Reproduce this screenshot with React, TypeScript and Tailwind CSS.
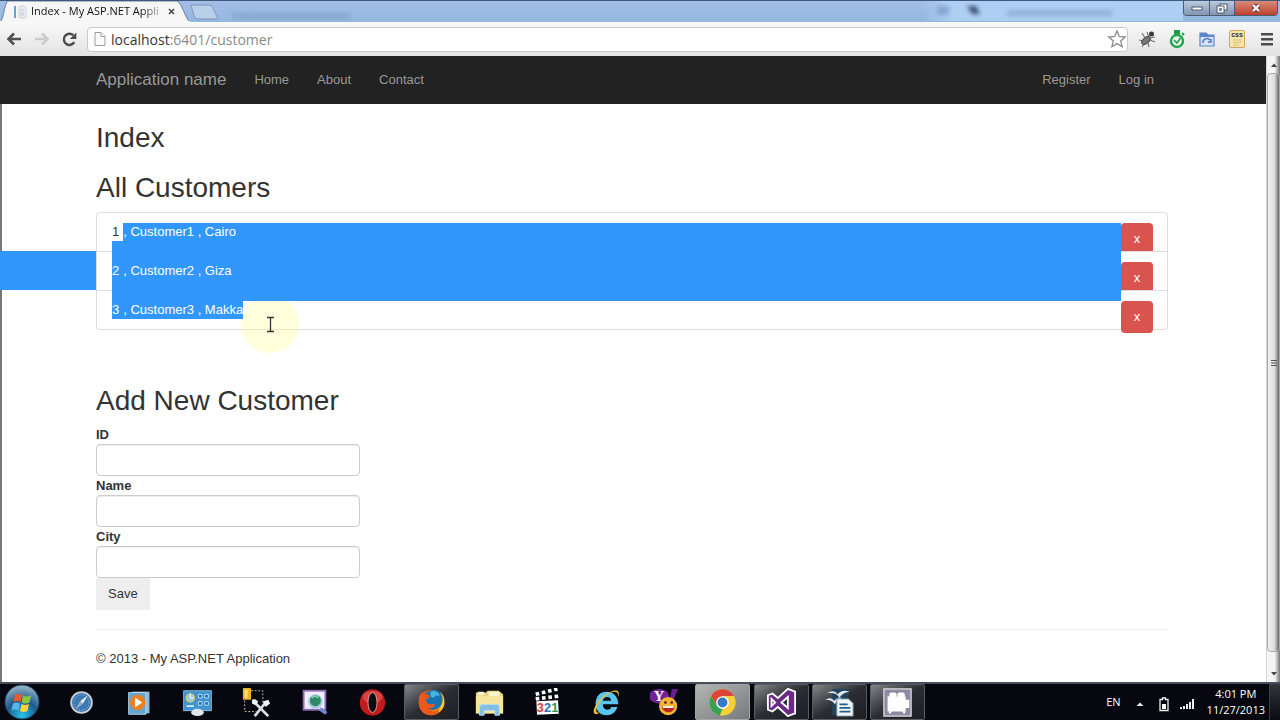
import type { ReactNode } from "react";

const customers = [
  { id: 1, name: "Customer1", city: "Cairo" },
  { id: 2, name: "Customer2", city: "Giza" },
  { id: 3, name: "Customer3", city: "Makka" },
];

const fields = ["ID", "Name", "City"];

/* ---------- Browser chrome ---------- */

function TabStrip() {
  return (
    <div className="relative flex h-[22px] items-stretch overflow-hidden border-t border-[#3d5a7c] bg-linear-to-b from-[#a3bde6] to-[#93b8e0]">
      <div className="relative h-full w-[190px] shrink-0">
        <svg viewBox="0 0 190 21" className="absolute inset-0 h-full w-full" aria-hidden="true">
          <path d="M0 21C4 18 4 3 8 0H177C182 2 186 19 190 21Z" fill="#f6f6f7" stroke="#6c7f9c" strokeWidth="1" />
          <rect x="0" y="20" width="190" height="2" fill="#f6f6f7" />
        </svg>
        <div className="relative flex h-full items-center pl-[13px]">
          <svg width="14" height="14" viewBox="0 0 14 14" aria-hidden="true">
            <rect x="1" y="1" width="2" height="12" fill="#6fa3cf" />
            <path d="M6 1h5l2 2v10H6z" fill="#e9ecef" stroke="#cfd6dd" />
            <path d="M7 5h4M7 8h4M7 10h4" stroke="#c3cbd3" />
          </svg>
          <span className="ml-1 w-[130px] overflow-hidden bg-linear-to-r from-[#111] from-85% to-[#ccc] bg-clip-text font-['Open_Sans',sans-serif] text-[11px] whitespace-nowrap text-transparent">
            Index - My ASP.NET Appli
          </span>
          <button type="button" aria-label="Close tab" className="ml-1.5">
            <svg width="9" height="9" viewBox="0 0 9 9"><path d="M2 2l5 5M7 2l-5 5" stroke="#444" strokeWidth="1.5" /></svg>
          </button>
        </div>
      </div>
      <button type="button" aria-label="New tab" className="h-[20px] self-start">
        <svg width="30" height="20" viewBox="0 0 30 20">
          <path d="M1 4h18q3 0 4 3l5 11H8q-3 0-4-3z" fill="#b9cfea" stroke="#7f98bb" />
        </svg>
      </button>
      <svg width="140" height="20" viewBox="0 0 140 20" aria-hidden="true">
        <rect x="12" y="12" width="118" height="6" fill="#6f8fb8" opacity=".4" className="blur-[2px]" />
      </svg>
      <div className="flex-1" />
      <svg width="260" height="20" viewBox="0 0 260 20" aria-hidden="true">
        <defs>
          <linearGradient id="glass">
            <stop offset="0" stopColor="#b3d3f7" stopOpacity="0" />
            <stop offset=".1" stopColor="#b3d3f7" stopOpacity=".8" />
            <stop offset="1" stopColor="#b3d3f7" stopOpacity=".8" />
          </linearGradient>
        </defs>
        <rect width="260" height="20" fill="url(#glass)" />
        <g className="blur-[2px]">
          <rect x="14" y="5" width="12" height="9" fill="#6c8fbd" opacity=".6" />
          <path d="M44 5h9l4 8h-8z" fill="#3d5577" />
          <rect x="84" y="9" width="105" height="6" fill="#7f9fc7" opacity=".6" />
        </g>
      </svg>
      <div className="flex h-[15px] overflow-hidden rounded-b border border-t-0 border-[#4c5b70]">
        <button type="button" aria-label="Minimize" className="flex w-[26px] items-center justify-center border-r border-[#4c5b70] bg-linear-to-b from-[#bccbdd] to-[#8196b3]">
          <svg width="12" height="6" viewBox="0 0 12 6"><rect x="1" y="2" width="10" height="3" fill="#fff" stroke="#4d5a6c" /></svg>
        </button>
        <button type="button" aria-label="Restore" className="flex w-[25px] items-center justify-center border-r border-[#4c5b70] bg-linear-to-b from-[#bccbdd] to-[#8196b3]">
          <svg width="12" height="11" viewBox="0 0 12 11">
            <rect x="4" y="1" width="7" height="6" fill="#fff" stroke="#4d5a6c" />
            <rect x="1" y="3" width="7" height="7" fill="#fff" stroke="#4d5a6c" />
            <rect x="3" y="5" width="3" height="3" fill="#7c8ba2" />
          </svg>
        </button>
        <button type="button" aria-label="Close" className="flex w-[42px] items-center justify-center bg-linear-to-b from-[#d98a7a] to-[#bb3f2d]">
          <svg width="12" height="10" viewBox="0 0 12 10">
            <path d="M3 2l6 6M9 2L3 8" stroke="#5f2a25" strokeWidth="4" />
            <path d="M3 2l6 6M9 2L3 8" stroke="#fff" strokeWidth="2.4" />
          </svg>
        </button>
      </div>
      <div className="w-0.5" />
    </div>
  );
}

function Toolbar() {
  return (
    <div className="flex h-[34px] items-center bg-linear-to-b from-[#f9f9f9] to-[#e3e3e3] pr-[3px] pl-[5px]">
      <button type="button" aria-label="Back" className="w-[28px]">
        <svg width="18" height="16" viewBox="0 0 18 16" fill="none" stroke="#505050" strokeWidth="2.6"><path d="M16 8H4M9 2.5L3.500 8L9 13.500" /></svg>
      </button>
      <button type="button" aria-label="Forward" className="w-[28px]">
        <svg width="18" height="16" viewBox="0 0 18 16" fill="none" stroke="#cbcbcb" strokeWidth="2.6"><path d="M2 8h12M9 2.500L14.500 8L9 13.500" /></svg>
      </button>
      <button type="button" aria-label="Reload" className="w-[26px]">
        <svg width="17" height="17" viewBox="0 0 17 17">
          <path d="M13.300 11.200A5.600 5.600 0 1 1 12.300 4.200" fill="none" stroke="#4c4c4c" strokeWidth="2.400" />
          <path d="M15.300 1.500V8H8.800z" fill="#4c4c4c" />
        </svg>
      </button>
      <div className="flex h-[25px] flex-1 items-center rounded-sm border border-[#c9c9c9] bg-white pl-1">
        <svg width="14" height="16" viewBox="0 0 14 16" fill="#fbfbfb" stroke="#9b9b9b" className="ml-px shrink-0" aria-hidden="true">
          <path d="M2 1.500h6l4 4v9H2z" />
          <path d="M8 1.500v4h4" />
        </svg>
        <p className="ml-1 flex-1 font-['Open_Sans',sans-serif] text-[14px] text-[#8a8a8a]">
          <span className="text-[#333]">localhost</span>:6401/customer
        </p>
        <button type="button" aria-label="Bookmark this page">
          <svg width="20" height="20" viewBox="0 0 20 20" fill="#fff" stroke="#8a8a8a" strokeWidth="1.300">
            <path d="M10 2l2.300 5.500 5.900.500-4.500 3.900 1.400 5.800-5.100-3.100-5.100 3.100 1.400-5.800L1.800 8l5.900-.500z" />
          </svg>
        </button>
      </div>
      <div className="ml-[9px] flex items-center gap-2.5">
        <button type="button" aria-label="Firebug" className="size-5">
          <svg viewBox="0 0 20 20" fill="none" stroke="#777" strokeWidth="1.200">
            <path d="M8 9L5 4M12 8l-2-5M7 12l-5-1M8 14l-3 4M11 14l1 4M13 11l5 2M13 9l5-1" />
            <ellipse cx="9" cy="11.500" rx="5" ry="2.800" transform="rotate(-40 9 11.500)" fill="#777" stroke="#555" />
            <circle cx="14.500" cy="5" r="2.500" fill="#3a3a3a" stroke="none" />
          </svg>
        </button>
        <button type="button" aria-label="Page timer" className="size-5">
          <svg viewBox="0 0 20 20">
            <path d="M7 1h6v4H7z" fill="#1d9c48" />
            <path d="M15 4l2 2" stroke="#1d9c48" strokeWidth="2" />
            <circle cx="10" cy="12" r="6" fill="#e5f6ea" stroke="#1fa34c" strokeWidth="2.400" />
            <path d="M7 11l3 3 3.500-5" fill="none" stroke="#1fa34c" strokeWidth="1.600" />
          </svg>
        </button>
        <button type="button" aria-label="Sync" className="size-5">
          <svg viewBox="0 0 20 20">
            <path d="M3 4h6l2 2h6v11H3z" fill="#d6e2f8" stroke="#5c86cf" strokeWidth="1.200" />
            <path d="M3 4h6l2 2h6v2H3z" fill="#5c86cf" />
            <path d="M6 14a4 4 0 0 1 7-3M14 10v3h-3" fill="none" stroke="#4a74c0" strokeWidth="1.400" />
          </svg>
        </button>
        <button type="button" aria-label="CSS viewer" className="size-5">
          <svg viewBox="0 0 20 20">
            <rect x="2.500" y="1.500" width="15" height="17" rx="1.500" fill="#f6e7ad" stroke="#cfa659" />
            <text x="10" y="8" textAnchor="middle" fontSize="7" fontWeight="700" fontFamily="Liberation Sans" fill="#333">css</text>
            <path d="M6 11h8M6 13.500h8M6 16h6" stroke="#dcbd6c" />
          </svg>
        </button>
        <button type="button" aria-label="Menu" className="size-5">
          <svg viewBox="0 0 20 20" fill="#4c4c4c"><path d="M4 4h12v2.500H4zM4 9h12v2.500H4zM4 14h12v2.500H4z" /></svg>
        </button>
      </div>
    </div>
  );
}

function Scrollbar() {
  return (
    <div className="flex w-[14px] shrink-0 flex-col items-center border-l border-[#d5d5d5] bg-linear-to-r from-[#f4f4f4] from-60% to-[#777]">
      <svg width="14" height="17" viewBox="0 0 14 17" aria-hidden="true"><path d="M4 11l3-3.500 3 3.500z" fill="#444" /></svg>
      <div className="flex w-full flex-1 items-center justify-center rounded-sm border border-[#aaa] bg-linear-to-r from-[#f2f2f2] via-[#dcdcdc] via-60% to-[#666]">
        <svg width="8" height="8" viewBox="0 0 8 8" aria-hidden="true"><path d="M1 1.500h6M1 4h6M1 6.500h6" stroke="#555" /></svg>
      </div>
      <svg width="14" height="30" viewBox="0 0 14 30" aria-hidden="true"><path d="M4 20h6l-3 3.500z" fill="#444" /></svg>
    </div>
  );
}

/* ---------- Web page ---------- */

function Navbar() {
  return (
    <nav className="flex h-12 items-center gap-7 bg-[#222] pr-[112px] pl-24 text-[13px] text-[#999]">
      <a href="#" className="text-[17px]">Application name</a>
      <a href="#">Home</a>
      <a href="#">About</a>
      <a href="#">Contact</a>
      <a href="#" className="ml-auto">Register</a>
      <a href="#">Log in</a>
    </nav>
  );
}

function CustomerList() {
  return (
    <div className="relative">
      <ul className="divide-y divide-[#ddd] rounded border border-[#ddd]">
        {customers.map((customer, index) => {
          const first = index === 0;
          const last = index === customers.length - 1;
          return (
            <li key={customer.id} className={last ? "relative flex h-[38px] items-start pt-2.5 pr-3.5 pl-[15px]" : "relative flex h-[39px] items-start pt-2.5 pr-3.5 pl-[15px]"}>
              {index === 1 && <span className="absolute -top-px right-full mr-px h-[39px] w-24 bg-[#3297fd]" />}
              <p className={last ? "z-10 flex-1 leading-[18px] text-white" : "z-10 h-[39px] flex-1 bg-[#3297fd] leading-[18px] text-white"}>
                <span className={last ? "inline-block bg-[#3297fd]" : "inline-block"}>
                  <span className={first ? "inline-block bg-white pr-1 text-[#333]" : "inline-block pr-1"}>{customer.id}</span>
                  {`, ${customer.name} , ${customer.city}`}
                </span>
              </p>
              <div className={last ? "h-8" : "h-7 overflow-hidden"}>
                <button type="button" aria-label={`Delete ${customer.name}`} className="size-8 rounded bg-[#d9534f] text-white">
                  x
                </button>
              </div>
            </li>
          );
        })}
      </ul>
      {/* pointer with its click highlight */}
      <svg width="60" height="60" viewBox="0 0 60 60" className="absolute top-[82px] left-[144px]" aria-hidden="true">
        <circle cx="30" cy="30" r="29" fill="#ffffa8" opacity=".4" />
        <path d="M27 23.500h3l.500.500.500-.500h3M27 37.500h3l.500-.500.500.500h3M30.500 24v13" fill="none" stroke="#333" strokeWidth="1.300" />
      </svg>
    </div>
  );
}

function CustomerForm() {
  return (
    <form onSubmit={(e) => e.preventDefault()} className="flex flex-col items-start">
      {fields.map((field) => (
        <div key={field}>
          <label htmlFor={field} className="block leading-[19px] font-bold">{field}</label>
          <input id={field} type="text" className="block h-8 w-[264px] rounded border border-[#ccc] bg-white px-3 shadow-[inset_0_1px_1px_rgba(0,0,0,0.075)]" />
        </div>
      ))}
      <button type="submit" className="h-8 bg-[#eee] px-3">Save</button>
    </form>
  );
}

/* ---------- Taskbar ---------- */

type TaskItem = { label: string; state?: "open" | "active"; icon: ReactNode };

const tasks: TaskItem[] = [
  {
    label: "Safari",
    icon: (
      <>
        <circle cx="16" cy="16" r="12.500" fill="#c9ced4" />
        <circle cx="16" cy="16" r="10.500" fill="#3c78b4" />
        <circle cx="16" cy="16" r="8.500" fill="none" stroke="#b9d4ec" strokeDasharray="1 2" />
        <path d="M23 8l-5.500 9.500-3-3z" fill="#e8eef4" />
        <path d="M9 24l5.500-9.500 3 3z" fill="#9eb0c2" />
      </>
    ),
  },
  {
    label: "Media Player",
    icon: (
      <>
        <path d="M8 4h19v24H8z" fill="#8ebbd8" />
        <path d="M4 5h19v24H4z" fill="#64a5cf" stroke="#bcd9ea" />
        <circle cx="14" cy="16" r="8.500" fill="#ec8021" />
        <path d="M11 10.500l8 5.500-8 5.500z" fill="#fff" />
      </>
    ),
  },
  {
    label: "Control Panel",
    icon: (
      <>
        <rect x="0" y="3" width="32" height="22" rx="1" fill="#3f93cf" stroke="#8fc5e7" />
        <circle cx="8" cy="11" r="4.500" fill="#8fd0ef" stroke="#dcc267" strokeWidth="1.500" />
        <path d="M8 6v5h4" stroke="#fff" fill="none" />
        <path d="M17 7h4v4h-4zM24 7h4v4h-4zM17 15h4v4h-4zM24 15h4v4h-4z" fill="#246aa8" stroke="#bfe2f5" />
        <path d="M4 20h8" stroke="#d5ecf8" strokeWidth="2" />
        <ellipse cx="16" cy="27" rx="7" ry="4" fill="#dfe7ec" />
      </>
    ),
  },
  {
    label: "Configuration",
    icon: (
      <>
        <path d="M10 3h13v13M3 14v12h13" fill="none" stroke="#d6d6a2" strokeDasharray="2 2" />
        <rect x="1" y="0" width="9" height="13" rx="1" fill="#eeb624" />
        <rect x="3" y="2" width="3" height="9" fill="#ffe38a" />
        <path d="M14 16l15 15M26 16L14 31" stroke="#d9dee2" strokeWidth="3" />
        <path d="M11 13l3-1 4 3-3 4-4-2zM23 15l6-2 2 4-5 4z" fill="#eff2f4" />
      </>
    ),
  },
  {
    label: "Magnifier",
    icon: (
      <>
        <rect x="4" y="3" width="24" height="21" fill="#f1edf7" stroke="#8f6cb3" strokeWidth="2" />
        <circle cx="17" cy="15" r="8" fill="#a8c9e9" />
        <circle cx="17" cy="14" r="6" fill="#2c8a62" />
        <path d="M13 11q4-4 7 0" stroke="#84d0a6" strokeWidth="2" fill="none" />
        <path d="M22 23l7 5" stroke="#7286d2" strokeWidth="4" />
      </>
    ),
  },
  {
    label: "Opera",
    icon: (
      <>
        <ellipse cx="16" cy="16" rx="14" ry="14.500" fill="#c11b20" />
        <ellipse cx="16" cy="10" rx="11" ry="7" fill="#ee6b60" opacity=".5" />
        <ellipse cx="16" cy="16" rx="5" ry="11" fill="#0b0c12" stroke="#f3aaa0" />
      </>
    ),
  },
  {
    label: "Firefox",
    state: "open",
    icon: (
      <>
        <circle cx="16" cy="16" r="14" fill="#e66000" />
        <circle cx="18" cy="13" r="11" fill="#1673b4" />
        <path d="M25 4c4 5 4 10 2 14-2 5-7 8-12 7 6 4 12 2 15-6 1-5 0-12-5-15z" fill="#ffca27" />
        <path d="M2 13C2 8 5 5 7 4c0 2 1 3 3 3 3 0 4 1 4 3l-4 3c0 3 2 5 5 5 2 0 3-1 5 0-1 4-6 6-10 3 4 7 12 5 15 1-1 6-5 8-10 8C6 30 1 23 2 13z" fill="#e8591b" />
        <path d="M15 4c5-2 9 1 10 5l-4-1-3 3-3-2z" fill="#49b5df" />
      </>
    ),
  },
  {
    label: "Explorer",
    icon: (
      <>
        <path d="M1 5h11l2-2h12l5 4v21H1z" fill="#e8d27c" />
        <path d="M3 4h7v4H3zM15 4h12v5H15z" fill="#f7f3cf" />
        <path d="M1 9h30v19H1z" fill="#f6e69c" />
        <path d="M5 30v-9q0-3 3-3h16q3 0 3 3v9h-5v-5H10v5z" fill="#83bfe2" stroke="#bfe2f3" />
      </>
    ),
  },
  {
    label: "Media Player Classic",
    icon: (
      <>
        <rect x="4" y="14" width="24" height="15" fill="#fff" transform="rotate(-3 16 20)" />
        <path d="M3 12l25-3M3 7l24-6" stroke="#fff" strokeWidth="4" strokeDasharray="4 3" />
        <g fontFamily="Liberation Sans" fontSize="14" fontWeight="700">
          <text x="4" y="27" fill="#db402e">3</text>
          <text x="12" y="27" fill="#2a72bd">2</text>
          <text x="20" y="27" fill="#2f9b4a">1</text>
        </g>
      </>
    ),
  },
  {
    label: "Internet Explorer",
    icon: (
      <>
        <path d="M28 21c-2 6-6 9-12 9C9 30 4 25 4 17S9 4 16 4s13 5 13 14H12c0 4 2 6 5 6 2 0 4-1 4-3z" fill="#5cc4f0" />
        <path d="M12 14h9c0-3-2-4-4.500-4S12 12 12 14z" fill="#07101c" />
        <path d="M29 10c2-6-1-9-8-6C12 7 4 17 2 24c-1 5 2 6 7 3-4 1-5-1-4-5 3-7 9-14 16-17 6-2 8 0 8 5z" fill="#f2c12e" />
      </>
    ),
  },
  {
    label: "Yahoo Messenger",
    icon: (
      <>
        <ellipse cx="10" cy="9" rx="11" ry="8" fill="#75209b" />
        <path d="M24 1h7l-5 12h-4z" fill="#6a1d91" />
        <text x="4" y="14" fontFamily="Liberation Serif" fontSize="16" fontWeight="700" fill="#fff">Y</text>
        <circle cx="20" cy="20" r="10" fill="#f4b532" />
        <circle cx="17" cy="16" r="1.500" fill="#4b230c" />
        <circle cx="24" cy="16" r="1.500" fill="#4b230c" />
        <path d="M13 20h14c0 9-13 9-14 0z" fill="#b62b19" />
        <path d="M14 20h12v2H14z" fill="#fff" />
      </>
    ),
  },
  {
    label: "Chrome",
    state: "active",
    icon: (
      <>
        <circle cx="16" cy="16" r="14.500" fill="#f7d038" />
        <path d="M3.400 8.800A14.500 14.500 0 0 1 28.600 8.800H16l-6.200 10.800z" fill="#de4536" />
        <path d="M3.400 8.800l6.400 10.800L16 23.200l-3 7A14.500 14.500 0 0 1 3.400 8.800z" fill="#35a353" />
        <circle cx="16" cy="16" r="7" fill="#fff" />
        <circle cx="16" cy="16" r="5.500" fill="#3579c9" />
      </>
    ),
  },
  {
    label: "Visual Studio",
    state: "open",
    icon: (
      <path
        d="M23 1l8 3v24l-8 3-11-10-6 5-5-2V8l5-2 6 5zM23 10l-7 6 7 6zM5 12v8l4-4z"
        fill="#6b2a87"
        fillRule="evenodd"
        stroke="#fff"
        strokeWidth="2"
      />
    ),
  },
  {
    label: "Writer",
    state: "open",
    icon: (
      <>
        <path d="M8 1h18v29H8z" fill="#24435a" />
        <path d="M2 6c6-4 9-3 12 1 3-4 7-5 13-3-6 1-9 3-11 7-3-5-7-6-14-5zM0 13c5-3 8-2 10 1 3-3 5-4 9-3-4 2-7 4-8 7-3-4-6-5-11-5z" fill="#dce6ec" />
        <path d="M13 12h13l5 5v14H13z" fill="#f2f5f7" stroke="#6f8ea3" />
        <path d="M16 18h9M16 22h12M16 26h12" stroke="#245d85" strokeWidth="1.800" />
      </>
    ),
  },
  {
    label: "Screen Recorder",
    state: "open",
    icon: (
      <>
        <rect x="1" y="1" width="30" height="30" fill="#8c89a1" stroke="#d8d7e0" strokeWidth="1.500" />
        <rect x="7" y="5" width="8" height="5" rx="2" fill="#fff" />
        <rect x="16" y="5" width="8" height="5" rx="2" fill="#fff" />
        <path d="M5 9h20v4h4v9h-4v4H5z" fill="#fff" />
        <path d="M9 25l-2 3M22 25l2 3" stroke="#fff" strokeWidth="2" />
      </>
    ),
  },
];

function Taskbar() {
  return (
    <footer className="flex h-[38px] items-center border-t-2 border-[#4a4c5a] bg-[#06070f] font-['Open_Sans',sans-serif] text-white">
      <button type="button" aria-label="Start" className="w-[52px] pl-1">
        <svg width="36" height="36" viewBox="0 0 36 36">
          <defs>
            <radialGradient id="orb" cx=".5" cy=".9" r=".9">
              <stop offset="0" stopColor="#25c3ee" />
              <stop offset=".5" stopColor="#1c5b8c" />
              <stop offset="1" stopColor="#9db9c9" />
            </radialGradient>
          </defs>
          <circle cx="18" cy="18" r="17" fill="url(#orb)" stroke="#20455f" />
          <path d="M11 11q3.500-2 7 0l-1.500 7q-3.500-2-7 0z" fill="#ec5a2a" />
          <path d="M19 11.500q3.500 2 8 0l-1.500 7q-4 2-8 0z" fill="#8cc63e" />
          <path d="M9 19.500q3.500-2 7 0l-1.500 7q-3.500-2-7 0z" fill="#58b4ea" />
          <path d="M17.500 20q3.500 2 7.500 0l-1.500 7q-4 2-7.500 0z" fill="#fcd23b" />
        </svg>
      </button>
      <div className="grid h-full w-[875px] grid-cols-15 justify-items-center">
        {tasks.map(({ label, state, icon }) => (
          <button
            key={label}
            type="button"
            aria-label={label}
            className={
              state === "active"
                ? "flex w-[55px] items-center justify-center rounded-xs border border-[#a5a5a5] bg-linear-to-br from-[#b5b5b5] to-[#77797b]"
                : state === "open"
                  ? "flex w-[55px] items-center justify-center rounded-xs border border-[#5a5c60] bg-linear-to-br from-[#85878a] via-[#2b2d32] to-[#1c1e23]"
                  : "flex w-[55px] items-center justify-center"
            }
          >
            <svg width="29" height="29" viewBox="0 0 32 32">{icon}</svg>
          </button>
        ))}
      </div>
      <div className="ml-auto flex h-full items-center">
        <span className="text-[11px]">EN</span>
        <svg width="10" height="8" viewBox="0 0 10 8" className="mt-1 ml-3.5" aria-hidden="true"><path d="M1.500 6L5 2.500 8.500 6z" fill="#eee" /></svg>
        <svg width="10" height="15" viewBox="0 0 10 15" className="mt-1 ml-3.5" aria-hidden="true">
          <path d="M3.500 1h3v1.500H9v11H1v-11h2.500z" fill="none" stroke="#eee" strokeWidth="1.300" />
          <rect x="3" y="7" width="4" height="5" fill="#fff" />
        </svg>
        <svg width="16" height="12" viewBox="0 0 16 12" className="mt-1 ml-2.5" aria-hidden="true">
          <path d="M1 9h2v2H1zM4 8h2v3H4zM7 6h2v5H7zM10 4h2v7h-2zM13 1h2v10h-2z" fill="#eee" />
        </svg>
        <p className="ml-3 text-center text-[11px] leading-4">4:01 PM<br />11/27/2013</p>
        <div className="ml-1 h-full w-[11px] border-l border-[#3c3e46] bg-linear-to-b from-[#34363c] to-[#0a0b10]" />
      </div>
    </footer>
  );
}

export default function App() {
  return (
    <div className="flex min-h-screen flex-col bg-white">
      <header>
        <TabStrip />
        <Toolbar />
      </header>
      <div className="flex flex-1 border-l-2 border-[#777]">
        <div className="-ml-0.5 flex-1 font-['Liberation_Sans',Arial,sans-serif] text-[13px] text-[#333]">
          <Navbar />
          <main className="pr-[98px] pl-24">
            <h2 className="mt-[18px] text-[28px] leading-8">Index</h2>
            <h2 className="mt-[18px] mb-2 text-[28px] leading-8">All Customers</h2>
            <CustomerList />
            <h2 className="mt-[55px] mb-2 text-[28px] leading-8">Add New Customer</h2>
            <CustomerForm />
            <hr className="mt-[19px] border-[#eee]" />
            <p className="mt-[19px] leading-[19px]">© 2013 - My ASP.NET Application</p>
          </main>
        </div>
        <Scrollbar />
      </div>
      <Taskbar />
    </div>
  );
}
